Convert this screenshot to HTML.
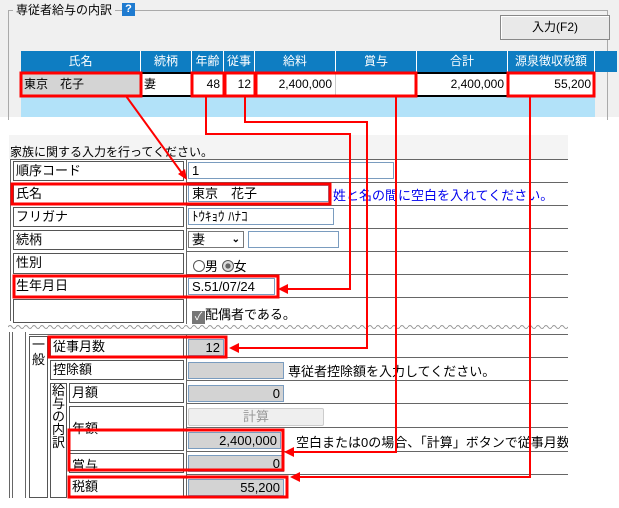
<!DOCTYPE html>
<html><head><meta charset="utf-8"><style>
*{margin:0;padding:0;box-sizing:border-box}
body{width:619px;height:508px;background:#fff;position:relative;overflow:hidden;font-family:"Liberation Sans","Noto Sans CJK JP",sans-serif;font-size:12px;color:#000}
.a{position:absolute}
.c{position:absolute;border:1px solid #555;background:#fff;line-height:18px;padding-left:2px;font-size:13px}
.f{position:absolute;border:1px solid #7a9cbf;background:#fff;height:17px;line-height:15px;padding:0 3px;font-size:13px}
.g{background:#d3d3d3;text-align:right}
.h{position:absolute;top:51px;height:21px;line-height:21px;color:#fff;text-align:center;font-size:12px;border-right:1px solid #fff}
.r1{position:absolute;top:74px;height:21px;line-height:21px;background:#fff;font-size:12px;text-align:right;padding-right:3px;border-right:1px solid #ccc}
.hl{position:absolute;left:10px;width:558px;height:1px;background:#666}
</style></head><body>
<div class="a" style="left:0;top:0;width:619px;height:117px;background:#f0f0f0"></div>
<div class="a" style="left:8px;top:10px;width:600px;height:110px;border:1px solid #aaa;border-bottom:none"></div>
<div class="a" style="left:13px;top:3px;padding:0 3px;background:#f0f0f0;font-size:12px;line-height:15px">専従者給与の内訳</div>
<div class="a" style="left:122px;top:3px;width:13px;height:13px;background:#1f7bd0;color:#fff;font-weight:bold;font-size:11px;line-height:13px;text-align:center">?</div>
<div class="a" style="left:500px;top:15px;width:110px;height:25px;border:1px solid #888;background:#e9e9e9;box-shadow:inset 1px 1px 0 #fff;text-align:center;line-height:23px;font-size:12px">入力(F2)</div>
<div class="a" style="left:21px;top:51px;width:596px;height:21px;background:#0e7dc2"></div>
<div class="h" style="left:21px;width:120px">氏名</div>
<div class="h" style="left:141px;width:51px">続柄</div>
<div class="h" style="left:192px;width:32px">年齢</div>
<div class="h" style="left:224px;width:31px">従事</div>
<div class="h" style="left:255px;width:81px">給料</div>
<div class="h" style="left:336px;width:81px">賞与</div>
<div class="h" style="left:417px;width:91px">合計</div>
<div class="h" style="left:508px;width:87px">源泉徴収税額</div>
<div class="a" style="left:21px;top:72px;width:574px;height:25px;background:#000"></div>
<div class="r1" style="left:21px;width:120px;background:#d4d4d4;text-align:left;padding-left:3px">東京　花子</div>
<div class="r1" style="left:141px;width:51px;text-align:left;padding-left:3px">妻</div>
<div class="r1" style="left:192px;width:32px">48</div>
<div class="r1" style="left:224px;width:31px">12</div>
<div class="r1" style="left:255px;width:81px">2,400,000</div>
<div class="r1" style="left:336px;width:81px"></div>
<div class="r1" style="left:417px;width:91px">2,400,000</div>
<div class="r1" style="left:508px;width:87px">55,200</div>
<div class="a" style="left:21px;top:97px;width:574px;height:20px;background:#b2e2f9"></div>

<div class="a" style="left:9px;top:135px;width:559px;height:24px;background:#f4f4f4"></div>
<div class="a" style="left:10px;top:143px;font-size:12px">家族に関する入力を行ってください。</div>
<div class="a" style="left:10px;top:159px;width:1px;height:162px;background:#666"></div>
<div class="hl" style="top:159px"></div>
<div class="c" style="left:13px;top:161px;width:171px;height:20px">順序コード</div>
<div class="c" style="left:13px;top:184px;width:171px;height:20px">氏名</div>
<div class="c" style="left:13px;top:207px;width:171px;height:20px">フリガナ</div>
<div class="c" style="left:13px;top:230px;width:171px;height:20px">続柄</div>
<div class="c" style="left:13px;top:253px;width:171px;height:21px">性別</div>
<div class="c" style="left:13px;top:276px;width:171px;height:21px">生年月日</div>
<div class="c" style="left:13px;top:299px;width:171px;height:24px"></div>
<div class="a" style="left:186px;top:159px;width:1px;height:165px;background:#666"></div>
<div class="hl" style="top:182px;left:186px;width:382px"></div>
<div class="hl" style="top:205px;left:186px;width:382px"></div>
<div class="hl" style="top:228px;left:186px;width:382px"></div>
<div class="hl" style="top:251px;left:186px;width:382px"></div>
<div class="hl" style="top:274px;left:186px;width:382px"></div>
<div class="hl" style="top:297px;left:186px;width:382px"></div>
<div class="f" style="left:188px;top:162px;width:206px">1</div>
<div class="f" style="left:188px;top:185px;width:141px">東京　花子</div>
<div class="a" style="left:333px;top:185px;color:#0000ee;font-size:13px">姓と名の間に空白を入れてください。</div>
<div class="f" style="left:188px;top:208px;width:146px">ﾄｳｷｮｳ ﾊﾅｺ</div>
<div class="f" style="left:188px;top:231px;width:56px;border-color:#777">妻 <span style="position:absolute;right:3px;font-size:10px;font-weight:bold">&#8964;</span></div>
<div class="f" style="left:248px;top:231px;width:91px"></div>
<div class="a" style="left:193px;top:256px;font-size:13px"><span style="display:inline-block;width:12px;height:12px;border:1px solid #555;border-radius:50%;vertical-align:-1px"></span>男 <span style="display:inline-block;width:12px;height:12px;border:1px solid #555;border-radius:50%;vertical-align:-1px;background:radial-gradient(#666 35%,#ddd 40%)"></span>女</div>
<div class="f" style="left:188px;top:278px;width:87px">S.51/07/24</div>
<div class="a" style="left:192px;top:304px;font-size:13px"><span style="display:inline-block;width:13px;height:13px;background:#777;color:#fff;font-size:11px;line-height:13px;text-align:center;vertical-align:-1px">✓</span>配偶者である。</div>
<svg class="a" style="left:0;top:0" width="619" height="508">
<defs><pattern id="w" x="8" y="323" width="8" height="8" patternUnits="userSpaceOnUse"><path d="M0 4 Q2 1 4 4 T8 4" fill="none" stroke="#999" stroke-width="1"/></pattern></defs>
<rect x="8" y="323" width="560" height="8" fill="url(#w)"/>
</svg>
<div class="a" style="left:9px;top:332px;width:1px;height:166px;background:#666"></div>
<div class="a" style="left:12px;top:332px;width:1px;height:166px;background:#666"></div>
<div class="a" style="left:25px;top:332px;width:1px;height:166px;background:#666"></div>
<div class="hl" style="top:334px;left:29px;width:539px"></div>
<div class="c" style="left:29px;top:336px;width:19px;height:162px;padding:0;text-align:center;line-height:15px">一<br>般</div>
<div class="c" style="left:50px;top:337px;width:134px;height:21px">従事月数</div>
<div class="c" style="left:50px;top:360px;width:134px;height:20px">控除額</div>
<div class="c" style="left:50px;top:383px;width:17px;height:115px;padding:0;text-align:center;line-height:13px">給<br>与<br>の<br>内<br>訳</div>
<div class="c" style="left:69px;top:383px;width:115px;height:20px">月額</div>
<div class="c" style="left:69px;top:406px;width:115px;height:45px;line-height:44px">年額</div>
<div class="c" style="left:69px;top:453px;width:115px;height:20px;line-height:24px">賞与</div>
<div class="c" style="left:69px;top:477px;width:115px;height:21px">税額</div>
<div class="a" style="left:186px;top:334px;width:1px;height:164px;background:#666"></div>
<div class="hl" style="top:357px;left:186px;width:382px"></div>
<div class="hl" style="top:380px;left:186px;width:382px"></div>
<div class="hl" style="top:403px;left:186px;width:382px"></div>
<div class="hl" style="top:427px;left:186px;width:382px"></div>
<div class="hl" style="top:451px;left:186px;width:382px"></div>
<div class="hl" style="top:474px;left:186px;width:382px"></div>
<div class="f g" style="left:188px;top:339px;width:36px">12</div>
<div class="f g" style="left:188px;top:362px;width:96px"></div>
<div class="a" style="left:288px;top:361px;font-size:13px">専従者控除額を入力してください。</div>
<div class="f g" style="left:188px;top:385px;width:96px">0</div>
<div class="a" style="left:188px;top:408px;width:136px;height:18px;border:1px solid #ccc;border-radius:2px;background:#efefef;color:#999;text-align:center;line-height:16px;font-size:13px">計算</div>
<div class="f g" style="left:188px;top:432px;width:93px">2,400,000</div>
<div class="a" style="left:296px;top:432px;width:272px;overflow:hidden;white-space:nowrap;font-size:13px">空白または0の場合、「計算」ボタンで従事月数、月額</div>
<div class="f g" style="left:188px;top:455px;width:96px">0</div>
<div class="f g" style="left:188px;top:479px;width:96px">55,200</div>
<div class="a" style="left:568px;top:130px;width:51px;height:378px;background:#fff"></div>
<svg class="a" style="left:0;top:0" width="619" height="508" fill="none" stroke="#f00" stroke-width="2">
<rect x="21" y="73" width="120" height="23" stroke-width="3"/>
<rect x="192" y="73" width="32" height="23" stroke-width="3"/>
<rect x="225" y="73" width="30" height="23" stroke-width="3"/>
<rect x="256" y="73" width="160" height="23" stroke-width="3"/>
<rect x="508" y="73" width="86" height="23" stroke-width="3"/>
<rect x="12" y="184" width="318" height="20" stroke-width="3"/>
<rect x="14" y="276" width="264" height="21" stroke-width="3"/>
<rect x="49" y="337" width="177" height="20" stroke-width="3"/>
<rect x="69" y="430" width="214" height="40" stroke-width="3"/>
<rect x="69" y="477" width="218" height="20" stroke-width="3"/>
<path d="M126 96 L184 176"/>
<path d="M206 96 V134 H350 V289 H284"/>
<path d="M245 96 V122 H367 V348 H235"/>
<path d="M396 96 V452 H290"/>
<path d="M530 96 V477 H296"/>
<g fill="#f00" stroke="none">
<path d="M187 180 L178 174 L185 169 Z"/>
<path d="M278 289 L288 284 L288 294 Z"/>
<path d="M229 348 L239 343 L239 353 Z"/>
<path d="M284 452 L294 447 L294 457 Z"/>
<path d="M290 477 L300 472 L300 482 Z"/>
</g>
</svg>
</body></html>
